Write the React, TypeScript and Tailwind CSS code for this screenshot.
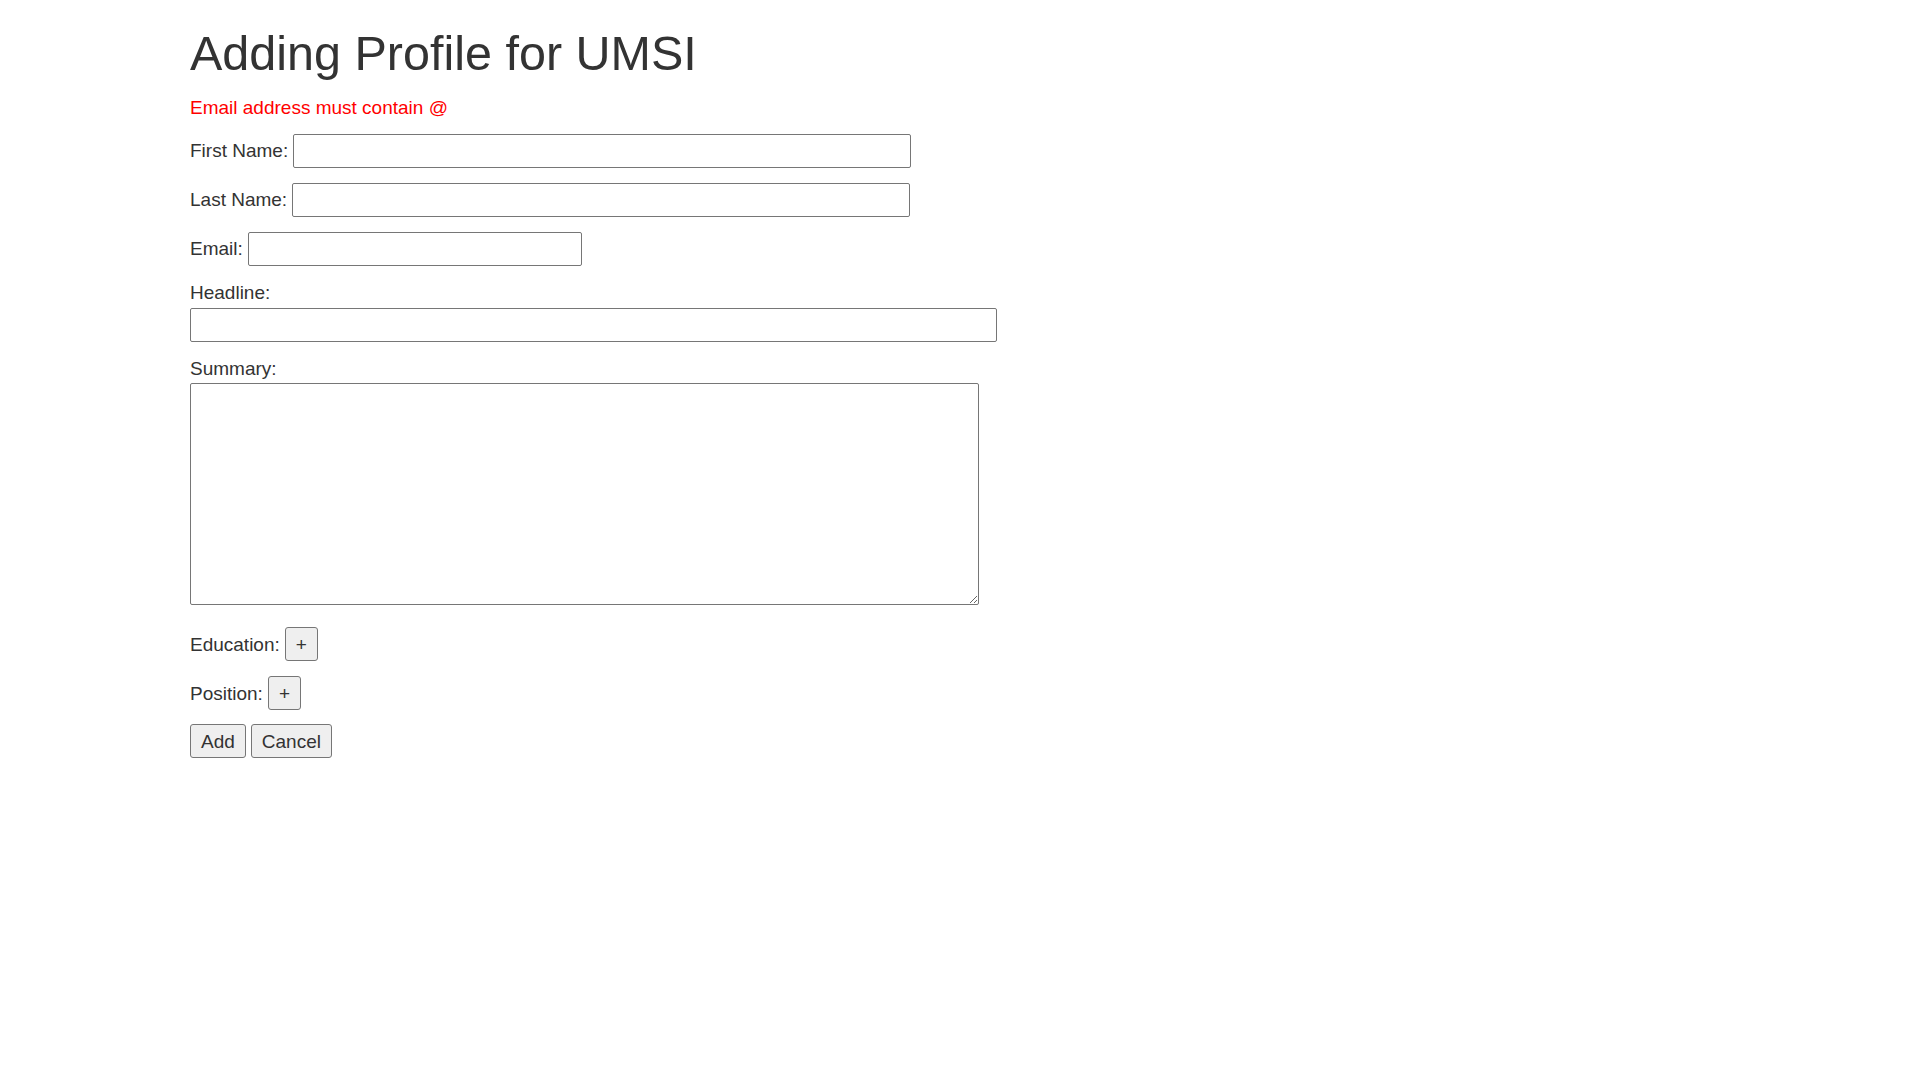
import React from 'react';

const inputCls =
  'h-[34px] border border-[#767676] rounded-[2px] bg-white px-[3px] text-[19px] outline-none';
const btnCls =
  'h-[34px] px-[10px] flex items-center justify-center border border-[#767676] rounded-[3px] bg-[#efefef] text-[19px] leading-[27px] text-[#333]';

function Field({ label, width }: { label: string; width: string }) {
  return (
    <div className="flex items-center gap-[5px]">
      <span className="mb-[2px]">{label}</span>
      <input type="text" className={`${inputCls} ${width}`} />
    </div>
  );
}

export default function App() {
  return (
    <div
      className="min-h-screen bg-white pl-[190px] pt-[26px] text-[#333] text-[19px] leading-[27px]"
      style={{ fontFamily: '"Liberation Sans", Arial, sans-serif' }}
    >
      <h1 className="text-[48.5px] leading-[54px] font-normal">
        Adding Profile for UMSI
      </h1>
      <p className="mt-[14px] text-[#ff0000]">Email address must contain @</p>

      <form className="flex flex-col items-start">
        <div className="mt-[13px]">
          <Field label="First Name:" width="w-[618px]" />
        </div>
        <div className="mt-[15px]">
          <Field label="Last Name:" width="w-[618px]" />
        </div>
        <div className="mt-[15px]">
          <Field label="Email:" width="w-[334px]" />
        </div>

        <label className="mt-[13px] block">Headline:</label>
        <input type="text" className={`${inputCls} mt-[2px] w-[807px]`} />

        <label className="mt-[13px] block">Summary:</label>
        <textarea className="mt-[1px] h-[222px] w-[789px] border border-[#767676] rounded-[2px] bg-white outline-none resize" />

        <div className="mt-[22px] flex items-center gap-[5px]">
          <span>Education:</span>
          <button type="button" className={btnCls}>
            +
          </button>
        </div>
        <div className="mt-[15px] flex items-center gap-[5px]">
          <span>Position:</span>
          <button type="button" className={btnCls}>
            +
          </button>
        </div>
        <div className="mt-[14px] flex items-center gap-[5px]">
          <button type="button" className={btnCls}>
            Add
          </button>
          <button type="button" className={btnCls}>
            Cancel
          </button>
        </div>
      </form>
    </div>
  );
}
